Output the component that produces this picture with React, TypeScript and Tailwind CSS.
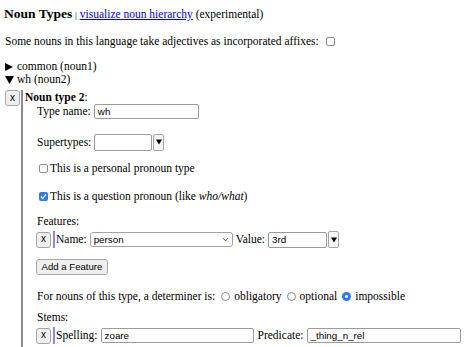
import React from 'react';

function XButton() {
    return (
        <button className="w-[15px] h-[16px] shrink-0 rounded-[3px] border border-[#a6a6a6] bg-[#efefef] font-['Liberation_Sans',sans-serif] text-[10px] leading-none text-black flex items-center justify-center pb-[1px]">
            x
        </button>
    );
}

function DropButton() {
    return (
        <span className="w-[11px] h-[17px] shrink-0 ml-[1px] rounded-[2px] border border-[#a6a6a6] bg-[#f5f5f5] flex items-center justify-center">
            <svg width="6" height="6" viewBox="0 0 6 6">
                <polygon points="0,0.5 6,0.5 3,5.5" fill="#000" />
            </svg>
        </span>
    );
}

function TextBox({ value, w, h = 'h-[15px]' }: { value: string; w: string; h?: string }) {
    return (
        <span className={`${w} ${h} shrink-0 ml-[3px] border border-[#9b9b9b] rounded-[2px] bg-white font-['Liberation_Sans',sans-serif] text-[9.8px] leading-none pl-[3px] flex items-center`}>
            {value}
        </span>
    );
}

function Checkbox({ checked }: { checked?: boolean }) {
    if (checked) {
        return (
            <span className="w-[9px] h-[9px] shrink-0 rounded-[2px] bg-[#2f7bf5] flex items-center justify-center">
                <svg width="7" height="7" viewBox="0 0 7 7">
                    <polyline points="1,3.6 2.8,5.4 6,1.4" fill="none" stroke="#fff" strokeWidth="1.4" />
                </svg>
            </span>
        );
    }
    return <span className="block w-[9px] h-[9px] shrink-0 rounded-[2px] border border-[#8d8d8d] bg-white" />;
}

function Radio({ checked }: { checked?: boolean }) {
    if (checked) {
        return (
            <span className="w-[9px] h-[9px] shrink-0 rounded-full bg-[#2f7bf5] flex items-center justify-center">
                <span className="block w-[3px] h-[3px] rounded-full bg-white" />
            </span>
        );
    }
    return <span className="block w-[9px] h-[9px] shrink-0 rounded-full border border-[#8d8d8d] bg-white" />;
}

export default function App() {
    return (
        <div className="w-[474px] h-[347px] overflow-hidden bg-white text-black font-['Liberation_Serif',serif] text-[11.5px] leading-[13px] pl-[5px] whitespace-nowrap">
            {/* heading */}
            <div className="mt-[6px] h-[15px] leading-[15px] -ml-[1px]">
                <span className="font-bold text-[13.5px]">Noun Types</span>{' '}
                <span className="text-[9px]">|</span>{' '}
                <a className="text-[#0000ee] underline">visualize noun hierarchy</a> (experimental)
            </div>

            <div className="mt-[14px] h-[13px] flex items-center">
                <span>Some nouns in this language take adjectives as incorporated affixes:</span>
                <span className="ml-[7px]"><Checkbox /></span>
            </div>

            <div className="mt-[12px] h-[13px] flex items-center">
                <svg width="8" height="8" viewBox="0 0 8 8" className="shrink-0">
                    <polygon points="0,0 8,4 0,8" fill="#000" />
                </svg>
                <span className="ml-[4px]">common (noun1)</span>
            </div>
            <div className="h-[13px] flex items-center">
                <svg width="9" height="8" viewBox="0 0 9 8" className="shrink-0">
                    <polygon points="0,0 9,0 4.5,8" fill="#000" />
                </svg>
                <span className="ml-[3px]">wh (noun2)</span>
            </div>

            {/* noun type 2 */}
            <div className="mt-[4px] flex items-start">
                <XButton />
                <div className="ml-[1px] h-[300px] border-l-2 border-[#8c8c8c] pl-[2px] flex-1">
                    <div className="mt-[1px] h-[13px]">
                        <b>Noun type 2</b>:
                    </div>

                    <div className="h-[15px] flex items-center pl-[12px]">
                        <span>Type name:</span>
                        <TextBox value="wh" w="w-[105px]" />
                    </div>

                    <div className="mt-[14px] h-[18px] flex items-center pl-[12px]">
                        <span>Supertypes:</span>
                        <TextBox value="" w="w-[58px]" h="h-[17px]" />
                        <DropButton />
                    </div>

                    <div className="mt-[11px] h-[13px] flex items-center pl-[14px]">
                        <Checkbox />
                        <span className="ml-[2px]">This is a personal pronoun type</span>
                    </div>

                    <div className="mt-[15px] h-[13px] flex items-center pl-[14px]">
                        <Checkbox checked />
                        <span className="ml-[2px]">
                            This is a question pronoun (like <i>who/what</i>)
                        </span>
                    </div>

                    <div className="mt-[12px] h-[13px] pl-[12px]">Features:</div>

                    <div className="mt-[3px] h-[17px] flex items-center pl-[11px]">
                        <XButton />
                        <span className="ml-[2px] w-[2px] h-[17px] bg-[#8f86e8] shrink-0" />
                        <span className="ml-[1px]">Name:</span>
                        <span className="ml-[3px] w-[143px] h-[15px] shrink-0 border border-[#a3a3a3] rounded-[3px] bg-white font-['Liberation_Sans',sans-serif] text-[9.8px] leading-none pl-[3px] pr-[3px] flex items-center justify-between">
                            <span>person</span>
                            <svg width="7" height="5" viewBox="0 0 7 5">
                                <polyline points="0.8,1 3.5,3.8 6.2,1" fill="none" stroke="#555" strokeWidth="1" />
                            </svg>
                        </span>
                        <span className="ml-[3px]">Value:</span>
                        <TextBox value="3rd" w="w-[59px]" h="h-[16px]" />
                        <DropButton />
                    </div>

                    <div className="mt-[11px] pl-[11px]">
                        <button className="w-[72px] h-[16px] rounded-[3px] border border-[#a6a6a6] bg-[#efefef] font-['Liberation_Sans',sans-serif] text-[9.6px] leading-none text-black flex items-center justify-center">
                            Add a Feature
                        </button>
                    </div>

                    <div className="mt-[15px] h-[13px] flex items-center pl-[12px]">
                        <span>For nouns of this type, a determiner is:</span>
                        <span className="ml-[6px]"><Radio /></span>
                        <span className="ml-[4px]">obligatory</span>
                        <span className="ml-[5px]"><Radio /></span>
                        <span className="ml-[4px]">optional</span>
                        <span className="ml-[5px]"><Radio checked /></span>
                        <span className="ml-[4px]">impossible</span>
                    </div>

                    <div className="mt-[8px] h-[13px] pl-[12px]">Stems:</div>

                    <div className="mt-[3px] h-[17px] flex items-center pl-[11px]">
                        <XButton />
                        <span className="ml-[2px] w-[2px] h-[17px] bg-[#8f86e8] shrink-0" />
                        <span className="ml-[1px]">Spelling:</span>
                        <TextBox value="zoare" w="w-[153px]" />
                        <span className="ml-[4px]">Predicate:</span>
                        <TextBox value="_thing_n_rel" w="w-[154px]" />
                    </div>
                </div>
            </div>
        </div>
    );
}
